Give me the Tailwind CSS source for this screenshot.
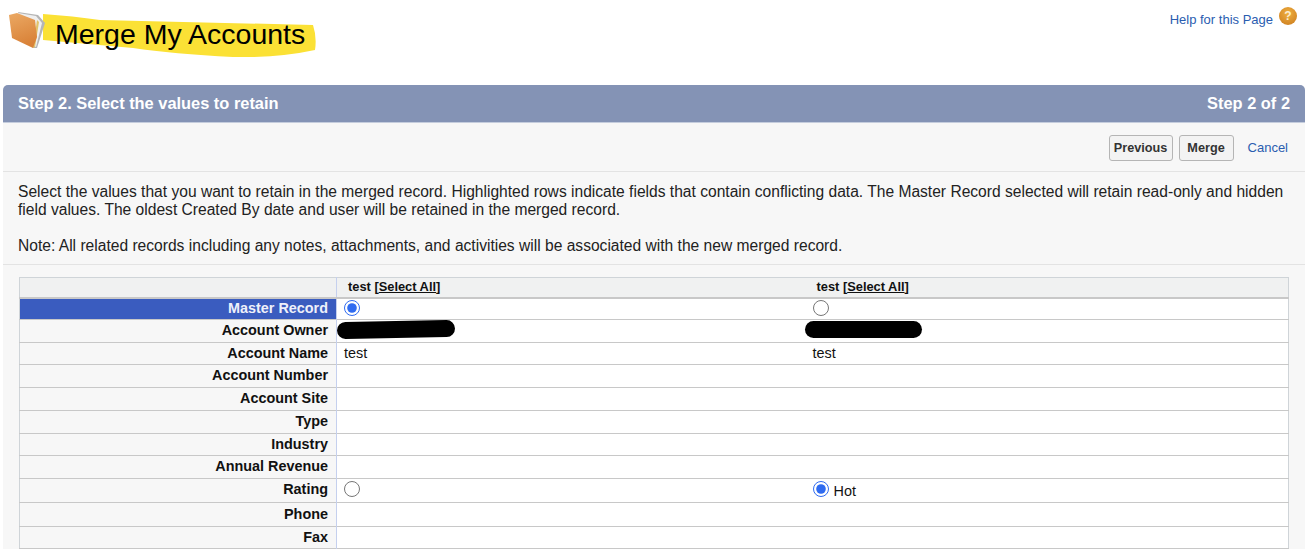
<!DOCTYPE html>
<html lang="en">
<head>
    <meta charset="UTF-8">
    <title>Merge My Accounts</title>
    <script src="https://cdn.jsdelivr.net/npm/@tailwindcss/browser@4"></script>
</head>
<body class="bg-white h-[552px] overflow-hidden font-['Liberation_Sans',Arial,sans-serif] text-[14.4px] leading-[16px] text-[#111]">

    <!-- Page title -->
    <div class="flex justify-between h-[85px] pl-[9px] pr-[13px]">
        <div class="relative flex items-start pt-[12px]">
            <svg class="absolute left-[34px] top-[13px]" width="274" height="46" viewBox="0 0 274 46">
                <path d="M0 1 Q30 3 57 7 L270 12 Q274 24 272 37 Q235 45 190 44 Q130 41 90 35 L0 27 Z" fill="#fbe135"/>
            </svg>
            <svg class="relative" width="38" height="40" viewBox="0 0 38 40">
                <defs>
                    <linearGradient id="folder" x1="0" y1="0" x2="0.3" y2="1">
                        <stop offset="0" stop-color="#eba964"/>
                        <stop offset="1" stop-color="#d98238"/>
                    </linearGradient>
                </defs>
                <path d="M9 0 L29 3 L36 11 L28 36 L24 36 Z" fill="#b5b5b5"/>
                <path d="M9 1 L27 4 L33 11 L27 35 L25 34 Z" fill="#efefef"/>
                <path d="M28 8 L30 10 L26 35 L24 36 Z" fill="#e2c36a"/>
                <path d="M0 3 L8 1 L26 8 L28 25 L24 36 L3 26 Z" fill="url(#folder)"/>
            </svg>
            <h1 class="relative ml-[8px] mt-[4px] text-[28.5px] leading-[36px] text-black">Merge My Accounts</h1>
        </div>
        <div class="flex items-start pt-[7px] gap-[6px] text-[13px] text-[#2a5db0]">
            <a href="#" class="mt-[6px] leading-[14px]">Help for this Page</a>
            <span class="w-[18px] h-[18px] rounded-full bg-[radial-gradient(circle_at_50%_35%,#f0b040,#c9791c)] text-[#fbeed0] text-[12px] font-bold leading-[18px] text-center">?</span>
        </div>
    </div>

    <!-- Main panel -->
    <div class="ml-[3px] w-[1302px] bg-[#f7f7f7] rounded-t-[5px]">
        <div class="flex justify-between items-center h-[38px] pl-[15px] pr-[15px] pb-[2px] bg-[#8493b5] rounded-t-[5px] border-b border-[#c5cddd] text-white font-bold text-[16.4px]">
            <span>Step 2. Select the values to retain</span>
            <span>Step 2 of 2</span>
        </div>

        <div class="flex justify-end items-center h-[48px] pt-[1px] pr-[17px] gap-[6px]">
            <button class="h-[26px] w-[64px] rounded-[3px] border border-[#b5b5b5] bg-[#f3f3f3] text-[12.7px] font-bold text-[#333]">Previous</button>
            <button class="h-[26px] w-[55px] rounded-[3px] border border-[#b5b5b5] bg-[#f3f3f3] text-[12.7px] font-bold text-[#333]">Merge</button>
            <a href="#" class="ml-[8px] text-[13px] text-[#2a5db0]">Cancel</a>
        </div>

        <div class="h-[94px] pl-[15px] pr-[16px] pt-[11px] border-y border-[#e3e3e3] text-[#222] text-[15.6px] leading-[18px]">
            <p>Select the values that you want to retain in the merged record. Highlighted rows indicate fields that contain conflicting data. The Master Record selected will retain read-only and hidden field values. The oldest Created By date and user will be retained in the merged record.</p>
            <p class="mt-[18px]">Note: All related records including any notes, attachments, and activities will be associated with the new merged record.</p>
        </div>

        <!-- Merge table -->
        <div class="pt-[12px] pl-[16px]">
            <table class="w-[1270px] table-fixed border-collapse bg-white border border-[#cfd4d8]">
                <colgroup>
                    <col class="w-[317px]">
                    <col class="w-[469px]">
                    <col>
                </colgroup>
                <tbody class="[&>tr+tr>td]:pb-[2px]">
                    <tr class="h-[20px] bg-[#f0f1f1] border-b-2 border-[#c8c8c8] text-[12.85px] font-bold">
                        <td></td>
                        <td class="pl-[11px] border-l border-[#c5d0ee]">test [<a href="#" class="underline">Select All</a>]</td>
                        <td class="pl-[11px]">test [<a href="#" class="underline">Select All</a>]</td>
                    </tr>
                    <tr class="h-[22px] border-b border-[#c8c8c8]">
                        <td class="bg-[#3a5cbf] text-[#eef0fa] font-bold text-right pr-[8px]">Master Record</td>
                        <td class="pl-[7px] border-l border-[#c5d0ee]"><input type="radio" name="master" checked class="block w-[16px] h-[16px] accent-[#2f6bf0]"></td>
                        <td class="pl-[7px]"><input type="radio" name="master" class="block w-[16px] h-[16px]"></td>
                    </tr>
                    <tr class="h-[23px] border-b border-[#c8c8c8]">
                        <td class="bg-[#f7f7f7] font-bold text-right pr-[8px]">Account Owner</td>
                        <td class="relative border-l border-[#c5d0ee]"><div class="absolute left-0 top-[1px] w-[118px] h-[17px] rounded-full bg-black -rotate-1"></div></td>
                        <td class="relative"><div class="absolute left-[-1px] top-[1px] w-[117px] h-[17px] rounded-full bg-black"></div></td>
                    </tr>
                    <tr class="h-[22px] border-b border-[#c8c8c8]">
                        <td class="bg-[#f7f7f7] font-bold text-right pr-[8px]">Account Name</td>
                        <td class="pl-[7px] border-l border-[#c5d0ee]">test</td>
                        <td class="pl-[7px]">test</td>
                    </tr>
                    <tr class="h-[23px] border-b border-[#c8c8c8]">
                        <td class="bg-[#f7f7f7] font-bold text-right pr-[8px]">Account Number</td>
                        <td class="border-l border-[#c5d0ee]"></td>
                        <td></td>
                    </tr>
                    <tr class="h-[23px] border-b border-[#c8c8c8]">
                        <td class="bg-[#f7f7f7] font-bold text-right pr-[8px]">Account Site</td>
                        <td class="border-l border-[#c5d0ee]"></td>
                        <td></td>
                    </tr>
                    <tr class="h-[23px] border-b border-[#c8c8c8]">
                        <td class="bg-[#f7f7f7] font-bold text-right pr-[8px]">Type</td>
                        <td class="border-l border-[#c5d0ee]"></td>
                        <td></td>
                    </tr>
                    <tr class="h-[22px] border-b border-[#c8c8c8]">
                        <td class="bg-[#f7f7f7] font-bold text-right pr-[8px]">Industry</td>
                        <td class="border-l border-[#c5d0ee]"></td>
                        <td></td>
                    </tr>
                    <tr class="h-[23px] border-b border-[#c8c8c8]">
                        <td class="bg-[#f7f7f7] font-bold text-right pr-[8px]">Annual Revenue</td>
                        <td class="border-l border-[#c5d0ee]"></td>
                        <td></td>
                    </tr>
                    <tr class="h-[24px] border-b border-[#c8c8c8]">
                        <td class="bg-[#f7f7f7] font-bold text-right pr-[8px]"><span class="relative -top-[1px]">Rating</span></td>
                        <td class="pl-[7px] border-l border-[#c5d0ee]"><input type="radio" name="rating" class="block w-[16px] h-[16px] -mt-[2px]"></td>
                        <td class="pl-[7px]">
                            <div class="flex items-center gap-[5px]"><input type="radio" name="rating" checked class="w-[16px] h-[16px] -mt-[2px] accent-[#2f6bf0]"><span class="mt-[2px]">Hot</span></div>
                        </td>
                    </tr>
                    <tr class="h-[24px] border-b border-[#c8c8c8]">
                        <td class="bg-[#f7f7f7] font-bold text-right pr-[8px]">Phone</td>
                        <td class="border-l border-[#c5d0ee]"></td>
                        <td></td>
                    </tr>
                    <tr class="h-[22px] border-b border-[#c8c8c8]">
                        <td class="bg-[#f7f7f7] font-bold text-right pr-[8px]">Fax</td>
                        <td class="border-l border-[#c5d0ee]"></td>
                        <td></td>
                    </tr>
                </tbody>
            </table>
        </div>
    </div>

</body>
</html>
